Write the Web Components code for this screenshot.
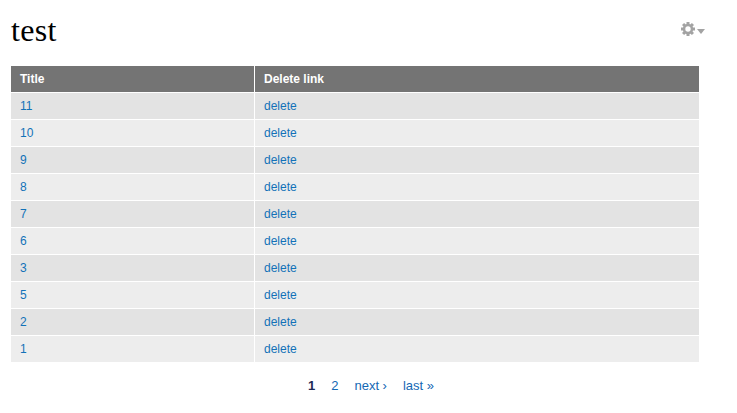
<!DOCTYPE html>
<html><head><meta charset="utf-8"><title>test</title>
<style>html,body{margin:0;background:#fff}</style></head>
<body>
<view-page></view-page>
<script>
class ViewHeader extends HTMLElement{constructor(){super();
const teeth=[0,45,90,135].map(a=>`<rect x="5.500" y="0" width="3" height="14" transform="rotate(${a} 7 7)"/>`).join('');
this.attachShadow({mode:'open'}).innerHTML=`<style>
:host{display:flex;justify-content:space-between;height:66px;box-sizing:border-box;padding:11px 32px 0 11px}
h1{margin:0;font:400 32px/38px "Liberation Serif",serif;letter-spacing:.35px;color:#000}
svg{display:block;margin-top:11px}
</style><h1><slot></slot></h1>
<svg width="24" height="14" viewBox="0 0 24 14"><g fill="#a3a3a3">${teeth}<circle cx="7" cy="7" r="5.200"/><path d="M16 7h8l-4 5z"/></g><circle cx="7" cy="7" r="2.700" fill="#fff"/></svg>`}}
customElements.define('view-header',ViewHeader);
class DataRow extends HTMLElement{constructor(){super();const h=this.hasAttribute('head');this.attachShadow({mode:'open'}).innerHTML=`<style>
:host{display:grid;grid-template-columns:243px 1fr;column-gap:1px;height:26px;margin-bottom:1px;
background:linear-gradient(to right,var(--bg) 243px,#fff 243px,#fff 244px,var(--bg) 244px);
font:${h?'700':'400'} 12px/26px "Liberation Sans",sans-serif;color:${h?'#fff':'#1272b8'}}
span{padding-left:9px}
</style><span>${this.getAttribute('title')}</span><span>${this.getAttribute('link')||'delete'}</span>`}}
customElements.define('data-row',DataRow);
class Pager extends HTMLElement{constructor(){super();this.attachShadow({mode:'open'}).innerHTML=`<style>
:host{display:flex;justify-content:center;gap:16px;margin-top:15px;padding-left:5px;font:400 13px/17px "Liberation Sans",sans-serif;color:#1468b4}
b{color:#1f2a55}
</style><b>1</b><span>2</span><span>next ›</span><span>last »</span>`}}
customElements.define('view-pager',Pager);
class ViewPage extends HTMLElement{constructor(){super();const r=[11,10,9,8,7,6,3,5,2,1];this.attachShadow({mode:'open'}).innerHTML=`<style>
:host{display:block}
.t{margin:0 38px 0 11px}
data-row:nth-child(even){--bg:#e3e3e3}data-row:nth-child(odd){--bg:#ededed}
data-row[head]{--bg:#747474}
</style><view-header>test</view-header><div class="t"><data-row head title="Title" link="Delete link"></data-row>
${r.map(n=>`<data-row title="${n}"></data-row>`).join('')}</div><view-pager></view-pager>`}}
customElements.define('view-page',ViewPage);
</script></body></html>
